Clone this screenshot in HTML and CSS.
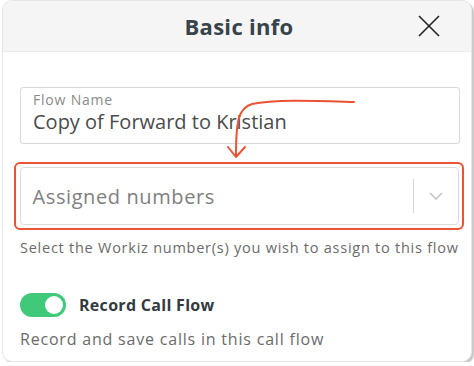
FILE: index.html
```html
<!DOCTYPE html>
<html lang="en">
<head>
<meta charset="UTF-8">
<meta name="viewport" content="width=device-width, initial-scale=1.0">
<title>Basic info</title>
<link rel="stylesheet" href="styles.css">
</head>
<body>

<div class="modal">

    <div class="modal-head">
        <h2>Basic info</h2>
        <svg class="close" width="22" height="22" viewBox="0 0 22 22">
            <path d="M1 1 L21 21 M21 1 L1 21" stroke="#222" stroke-width="1.6" fill="none"/>
        </svg>
    </div>

    <div class="modal-body">

        <div class="field">
            <span class="field-label">Flow Name</span>
            <span class="field-value">Copy of Forward to Kristian</span>
        </div>

        <div class="highlight">
            <div class="select">
                <span class="placeholder">Assigned numbers</span>
                <span class="sep"></span>
                <svg class="chev" width="14" height="8" viewBox="0 0 14 8">
                    <path d="M1 1 L7 7 L13 1" stroke="#c4c4c4" stroke-width="1.6" fill="none"/>
                </svg>
            </div>
        </div>

        <p class="hint">Select the Workiz number(s) you wish to assign to this flow</p>

        <div class="toggle-row">
            <span class="toggle"><span class="knob"></span></span>
            <span class="toggle-label">Record Call Flow</span>
        </div>

        <p class="desc">Record and save calls in this call flow</p>

    </div>

    <svg class="arrow" width="474" height="366" viewBox="0 0 474 366">
        <path d="M354 102 C 320 101, 275 99, 252 104 C 238 108, 236 122, 236 156" stroke="#ea5333" stroke-width="2" fill="none" stroke-linecap="round"/>
        <path d="M228 147 L236 157 L245 147" stroke="#ea5333" stroke-width="2" fill="none" stroke-linecap="round" stroke-linejoin="round"/>
    </svg>

</div>

</body>
</html>
```

FILE: styles.css
```css
*{
    box-sizing:border-box;
}

body{
    margin:0;
    background:#fff;
    font-family:"Open Sans",sans-serif;
}

.modal{
    position:relative;
    width:470px;
    height:362px;
    margin-left:2px;
    background:#fff;
    border:1px solid #e6e6e6;
    border-radius:10px;
    box-shadow:2px 2px 1px #c9c9c9;
    overflow:hidden;
}

.modal-head{
    height:51px;
    background:#f5f5f5;
    border-bottom:1px solid #ececec;
    display:flex;
    align-items:center;
    justify-content:center;
    position:relative;
}

.modal-head h2{
    margin:0 0 0 4px;
    font-size:22px;
    font-weight:700;
    letter-spacing:.3px;
    color:#38434a;
}

.close{
    position:absolute;
    right:31px;
    top:14px;
}

.modal-body{
    padding:35px 11px 0 17px;
}

.field{
    height:57px;
    border:1px solid #dadada;
    border-radius:3px;
    padding:4px 12px 0;
    display:flex;
    flex-direction:column;
}

.field-label{
    font-size:14px;
    letter-spacing:.8px;
    color:#8a8a8a;
    line-height:16px;
}

.field-value{
    font-size:20px;
    color:#4b4b4b;
    line-height:28px;
}

.highlight{
    margin:18px -4px 0 -6px;
    border:2.5px solid #ea5333;
    border-radius:6px;
    padding:3px 3.5px;
}

.select{
    height:58px;
    border:1px solid #dcdcdc;
    border-radius:4px;
    display:flex;
    align-items:center;
    padding-left:12px;
}

.placeholder{
    flex:1;
    font-size:20px;
    letter-spacing:.6px;
    color:#808080;
}

.sep{
    width:1px;
    height:34px;
    background:#d4d4d4;
}

.chev{
    margin:0 15px 0 15px;
}

.hint{
    margin:8px 0 0;
    font-size:14.5px;
    letter-spacing:.75px;
    color:#6b6b6b;
}

.toggle-row{
    margin-top:36px;
    display:flex;
    align-items:center;
    gap:13px;
}

.toggle{
    width:46px;
    height:24px;
    border-radius:12px;
    background:#41c97a;
    position:relative;
}

.knob{
    position:absolute;
    right:3px;
    top:3px;
    width:18px;
    height:18px;
    border-radius:50%;
    background:#fff;
}

.toggle-label{
    font-size:16px;
    font-weight:700;
    letter-spacing:.3px;
    color:#333b40;
}

.desc{
    margin:11px 0 0;
    font-size:16px;
    letter-spacing:.8px;
    color:#6b6b6b;
}

.arrow{
    position:absolute;
    left:-3px;
    top:-1px;
    pointer-events:none;
}
```
